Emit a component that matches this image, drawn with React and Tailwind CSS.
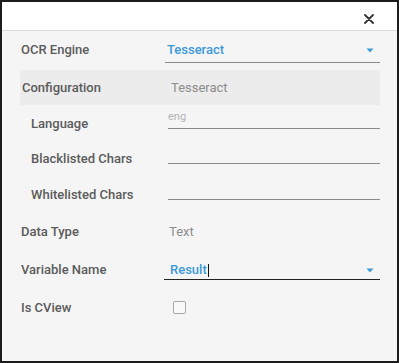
import React from "react";

const Caret = () => (
  <svg width="8" height="5" viewBox="0 0 8 5" className="shrink-0">
    <path d="M0.5 0.5 L7.5 0.5 L4 4.5 Z" fill="#3d9ad9" />
  </svg>
);

export default function App() {
  const label = "text-[13px] leading-[16px] font-medium text-[#5b5b5b] shrink-0";
  return (
    <div className="w-[399px] h-[363px] border-2 border-[#1c1c1c] bg-[#f5f5f5] flex flex-col font-['Roboto',sans-serif] overflow-hidden">
      <div className="h-[29px] bg-white border-b border-[#dadada] flex items-start justify-end pr-[23px] pt-[12px] shrink-0">
        <svg width="10" height="10" viewBox="0 0 10 10">
          <path d="M1 1 L9 9 M9 1 L1 9" stroke="#333" strokeWidth="1.8" strokeLinecap="round" />
        </svg>
      </div>
      <div className="flex flex-col pl-[19px] pr-[17px]">
        {/* OCR Engine */}
        <div className="h-[39px] flex items-start">
          <div className={`${label} w-[144px] mt-[11px]`}>OCR Engine</div>
          <div className="flex-1 mt-[7px] h-[25px] border-b border-[#8a8a8a] flex items-center justify-between pl-[2px] pr-[6px]">
            <span className="text-[13px] font-medium text-[#3d9ad9]">Tesseract</span>
            <Caret />
          </div>
        </div>
        {/* Configuration band */}
        <div className="h-[35px] bg-[#ececec] flex items-center ml-[-1px] pl-[2px]">
          <div className={`${label} w-[149px]`}>Configuration</div>
          <span className="text-[13px] text-[#8d8d8d]">Tesseract</span>
        </div>
        {/* Language */}
        <div className="h-[36px] flex items-start">
          <div className={`${label} w-[147px] pl-[10px] mt-[11px]`}>Language</div>
          <div className="flex-1 mt-[5px] h-[19px] border-b border-[#8a8a8a]">
            <span className="text-[11px] leading-[14px] text-[#b3b3b3] block">eng</span>
          </div>
        </div>
        {/* Blacklisted */}
        <div className="h-[36px] flex items-start">
          <div className={`${label} w-[147px] pl-[10px] mt-[10px]`}>Blacklisted Chars</div>
          <div className="flex-1 mt-[4px] h-[19px] border-b border-[#8a8a8a]"></div>
        </div>
        {/* Whitelisted */}
        <div className="h-[36px] flex items-start">
          <div className={`${label} w-[147px] pl-[10px] mt-[10px]`}>Whitelisted Chars</div>
          <div className="flex-1 mt-[4px] h-[19px] border-b border-[#8a8a8a]"></div>
        </div>
        {/* Data Type */}
        <div className="h-[38px] flex items-start">
          <div className={`${label} w-[148px] mt-[11px]`}>Data Type</div>
          <span className="mt-[11px] text-[13px] leading-[16px] text-[#8d8d8d]">Text</span>
        </div>
        {/* Variable Name */}
        <div className="h-[38px] flex items-start">
          <div className={`${label} w-[143px] mt-[11px]`}>Variable Name</div>
          <div className="flex-1 mt-[10px] h-[19px] border-b border-[#222] flex items-center justify-between pl-[6px] pr-[6px]">
            <span className="flex items-center">
              <span className="text-[13px] font-medium text-[#3d9ad9]">Result</span>
              <span className="w-[1px] h-[13px] bg-[#111] ml-[1px]"></span>
            </span>
            <Caret />
          </div>
        </div>
        {/* Is CView */}
        <div className="h-[38px] flex items-start">
          <div className={`${label} w-[152px] mt-[11px]`}>Is CView</div>
          <div className="mt-[12px] w-[13px] h-[13px] border border-[#a9a9a9] rounded-[2px] bg-[#f9f9f9]"></div>
        </div>
      </div>
    </div>
  );
}
